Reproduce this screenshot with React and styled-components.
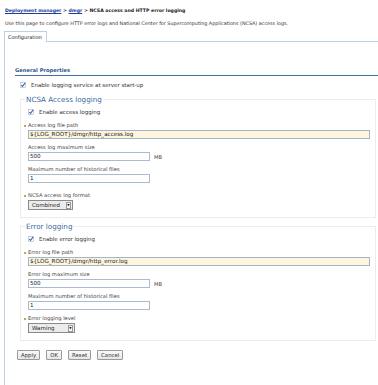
import React from 'react';
import styled, { createGlobalStyle } from 'styled-components';

const GlobalStyle = createGlobalStyle`
  html, body {
    margin: 0;
    padding: 0;
    background: #fff;
  }
  body {
    font-family: "DejaVu Sans", "Liberation Sans", sans-serif;
    color: #333;
  }
`;

const Page = styled.div`
  width: 378px;
  height: 385px;
  overflow: hidden;
  padding-top: 7px;
  box-sizing: border-box;
`;

const Breadcrumb = styled.div`
  padding-left: 5px;
  font-size: 4.65px;
  line-height: 8px;
  font-weight: bold;
  color: #222;

  a {
    color: #1d3f9a;
    text-decoration: underline;
  }
`;

const Description = styled.div`
  padding-left: 5px;
  margin-top: 4px;
  font-size: 4.85px;
  line-height: 8px;
  color: #333;
`;

const Tabs = styled.div`
  display: flex;
  margin-top: 4px;
  margin-left: 4px;
  height: 10px;
  border-bottom: 1px solid #bfcfe6;
`;

const Tab = styled.div`
  padding: 0 4px 0 3px;
  border: 1px solid #bfcfe6;
  border-bottom: none;
  background: #fff;
  font-size: 5px;
  line-height: 10px;
  color: #222;
  margin-bottom: -1px;
  height: 11px;
  box-sizing: border-box;
`;

const Panel = styled.div`
  margin-left: 4px;
  border-left: 1px solid #bfcfe6;
  padding: 25px 0 30px 10px;
`;

const SectionTitle = styled.div`
  font-size: 5.2px;
  line-height: 7px;
  font-weight: bold;
  color: #2e568a;
  border-bottom: 1px solid #3f6ea6;
  padding-bottom: 1px;
`;

const CheckRow = styled.label`
  display: flex;
  align-items: center;
  gap: 5px;
  height: 8px;
  margin-top: ${({ $top }) => $top}px;
  margin-left: ${({ $left }) => $left || 0}px;
  font-size: 5.5px;
  color: #333;
`;

const Fieldset = styled.fieldset`
  margin: ${({ $top }) => $top}px 2px 0 5px;
  border: 1px solid #ececec;
  padding: 0 5px 7px 7px;
  min-width: 0;
`;

const Legend = styled.legend`
  font-size: 7.2px;
  line-height: 9px;
  color: #3b6aa3;
  padding: 0 1px;
  margin-left: -3px;
`;

const Label = styled.div`
  display: flex;
  align-items: center;
  font-size: 5.2px;
  line-height: 7px;
  color: #444;
  margin-top: ${({ $top }) => $top}px;
  margin-left: ${({ $req }) => ($req ? -4 : 0)}px;
`;

const Bullet = styled.span`
  display: inline-block;
  width: 2px;
  height: 2px;
  border-radius: 50%;
  background: #a38a2e;
  margin-right: 2px;
`;

const InputRow = styled.div`
  display: flex;
  align-items: center;
  gap: 4px;
  margin-top: 1px;
`;

const TextInput = styled.div`
  box-sizing: border-box;
  width: ${({ $wide }) => ($wide ? '342px' : '122px')};
  height: 9px;
  border: 1px solid ${({ $req }) => ($req ? '#9fb6cc' : '#a9bccf')};
  background: ${({ $req }) => ($req ? '#fff5dc' : '#fff')};
  font-size: 5.6px;
  line-height: 7px;
  padding-left: 1px;
  color: #222;
`;

const Unit = styled.span`
  font-size: 5.2px;
  color: #444;
`;

const Select = styled.div`
  display: flex;
  align-items: center;
  justify-content: space-between;
  box-sizing: border-box;
  width: ${({ $w }) => $w}px;
  height: 10px;
  margin-top: 1px;
  border: 1px solid #8a8a8a;
  background: #ececec;
  padding: 0 1px 0 3px;
  font-size: 5.5px;
  color: #222;
`;

const Arrow = styled.span`
  display: flex;
  align-items: center;
  justify-content: center;
  width: 5px;
  height: 7px;
  background: #fafafa;
  border: 1px solid #999;
  box-sizing: border-box;
  font-size: 3px;
  line-height: 1;
`;

const Buttons = styled.div`
  display: flex;
  gap: 6px;
  margin-top: 9px;
  margin-left: 2px;
`;

const Button = styled.div`
  box-sizing: border-box;
  height: 10px;
  padding: 0 3px;
  border: 1px solid #9a9a9a;
  border-radius: 1px;
  background: linear-gradient(#fafafa, #e6e6e6);
  font-size: 5.4px;
  line-height: 8px;
  color: #333;
`;

const Check = () => (
  <svg width="6" height="6" viewBox="0 0 6 6">
    <rect x="0.5" y="0.5" width="5" height="5" fill="#fff" stroke="#a8b4c4" strokeWidth="0.6" />
    <path d="M1.2 3 L2.5 4.4 L5.2 0.9" fill="none" stroke="#3d68b4" strokeWidth="1.1" />
  </svg>
);

const Field = ({ label, req, value, wide, unit, top }) => (
  <>
    <Label $top={top} $req={req}>
      {req && <Bullet />}
      {label}
    </Label>
    <InputRow>
      <TextInput $wide={wide} $req={req}>{value}</TextInput>
      {unit && <Unit>{unit}</Unit>}
    </InputRow>
  </>
);

const App = () => (
  <Page>
    <GlobalStyle />
    <Breadcrumb>
      <a>Deployment manager</a> &gt; <a>dmgr</a> &gt; NCSA access and HTTP error logging
    </Breadcrumb>
    <Description>
      Use this page to configure HTTP error logs and National Center for Supercomputing Applications (NCSA) access logs.
    </Description>
    <Tabs>
      <Tab>Configuration</Tab>
    </Tabs>
    <Panel>
      <SectionTitle>General Properties</SectionTitle>
      <CheckRow $top={5} $left={5}>
        <Check />
        Enable logging service at server start-up
      </CheckRow>

      <Fieldset $top={6}>
        <Legend>NCSA Access logging</Legend>
        <CheckRow $top={4}>
          <Check />
          Enable access logging
        </CheckRow>
        <Field top={6} req label="Access log file path" value="${LOG_ROOT}/dmgr/http_access.log" wide />
        <Field top={5} label="Access log maximum size" value="500" unit="MB" />
        <Field top={5} label="Maximum number of historical files" value="1" />
        <Label $top={9} $req>
          <Bullet />
          NCSA access log format
        </Label>
        <Select $w={45}>
          Combined
          <Arrow>▼</Arrow>
        </Select>
      </Fieldset>

      <Fieldset $top={4}>
        <Legend>Error logging</Legend>
        <CheckRow $top={4}>
          <Check />
          Enable error logging
        </CheckRow>
        <Field top={6} req label="Error log file path" value="${LOG_ROOT}/dmgr/http_error.log" wide />
        <Field top={5} label="Error log maximum size" value="500" unit="MB" />
        <Field top={5} label="Maximum number of historical files" value="1" />
        <Label $top={5} $req>
          <Bullet />
          Error logging level
        </Label>
        <Select $w={47}>
          Warning
          <Arrow>▼</Arrow>
        </Select>
      </Fieldset>

      <Buttons>
        <Button>Apply</Button>
        <Button>OK</Button>
        <Button>Reset</Button>
        <Button>Cancel</Button>
      </Buttons>
    </Panel>
  </Page>
);

export default App;
